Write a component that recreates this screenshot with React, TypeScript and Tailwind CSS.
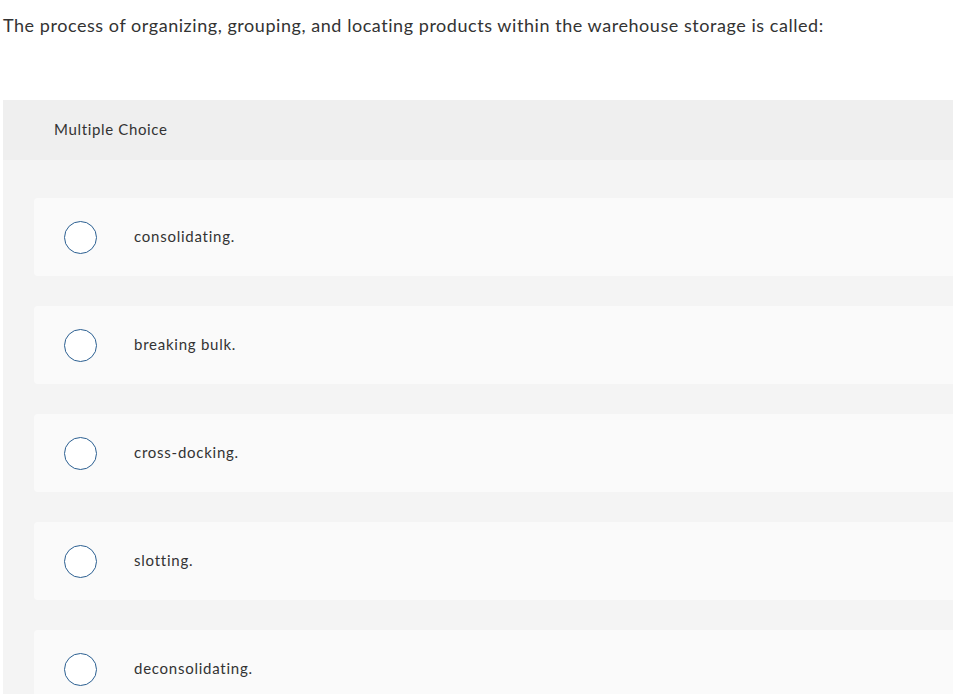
const options = [
  "consolidating.",
  "breaking bulk.",
  "cross-docking.",
  "slotting.",
  "deconsolidating.",
];

export default function App() {
  return (
    <div className="h-[694px] w-[954px] overflow-hidden bg-white font-['Lato','Liberation_Sans',sans-serif] text-[#333]">
      {/* Question prompt */}
      <p className="pl-[3px] pt-[13px] text-[18px] leading-[24px] tracking-[0.55px]">
        The process of organizing, grouping, and locating products within the warehouse storage is called:
      </p>

      {/* Answer panel */}
      <div className="ml-[3px] mr-[1px] mt-[63px] bg-[#f4f4f4]">
        <div className="flex h-[60px] items-center bg-[#efefef] pb-[2px] pl-[51px] text-[15px] tracking-[0.65px]">
          Multiple Choice
        </div>
        <div className="flex flex-col gap-[30px] pl-[31px] pt-[38px]">
          {options.map((opt) => (
            <label
              key={opt}
              className="flex h-[78px] items-center rounded-l-[4px] bg-[#fafafa]"
            >
              <span className="ml-[30px] h-[33px] w-[33px] rounded-full border-[1.5px] border-[#2b5f91] bg-white" />
              <span className="mb-[2px] ml-[37px] text-[15px] tracking-[0.75px]">{opt}</span>
            </label>
          ))}
        </div>
      </div>
    </div>
  );
}
